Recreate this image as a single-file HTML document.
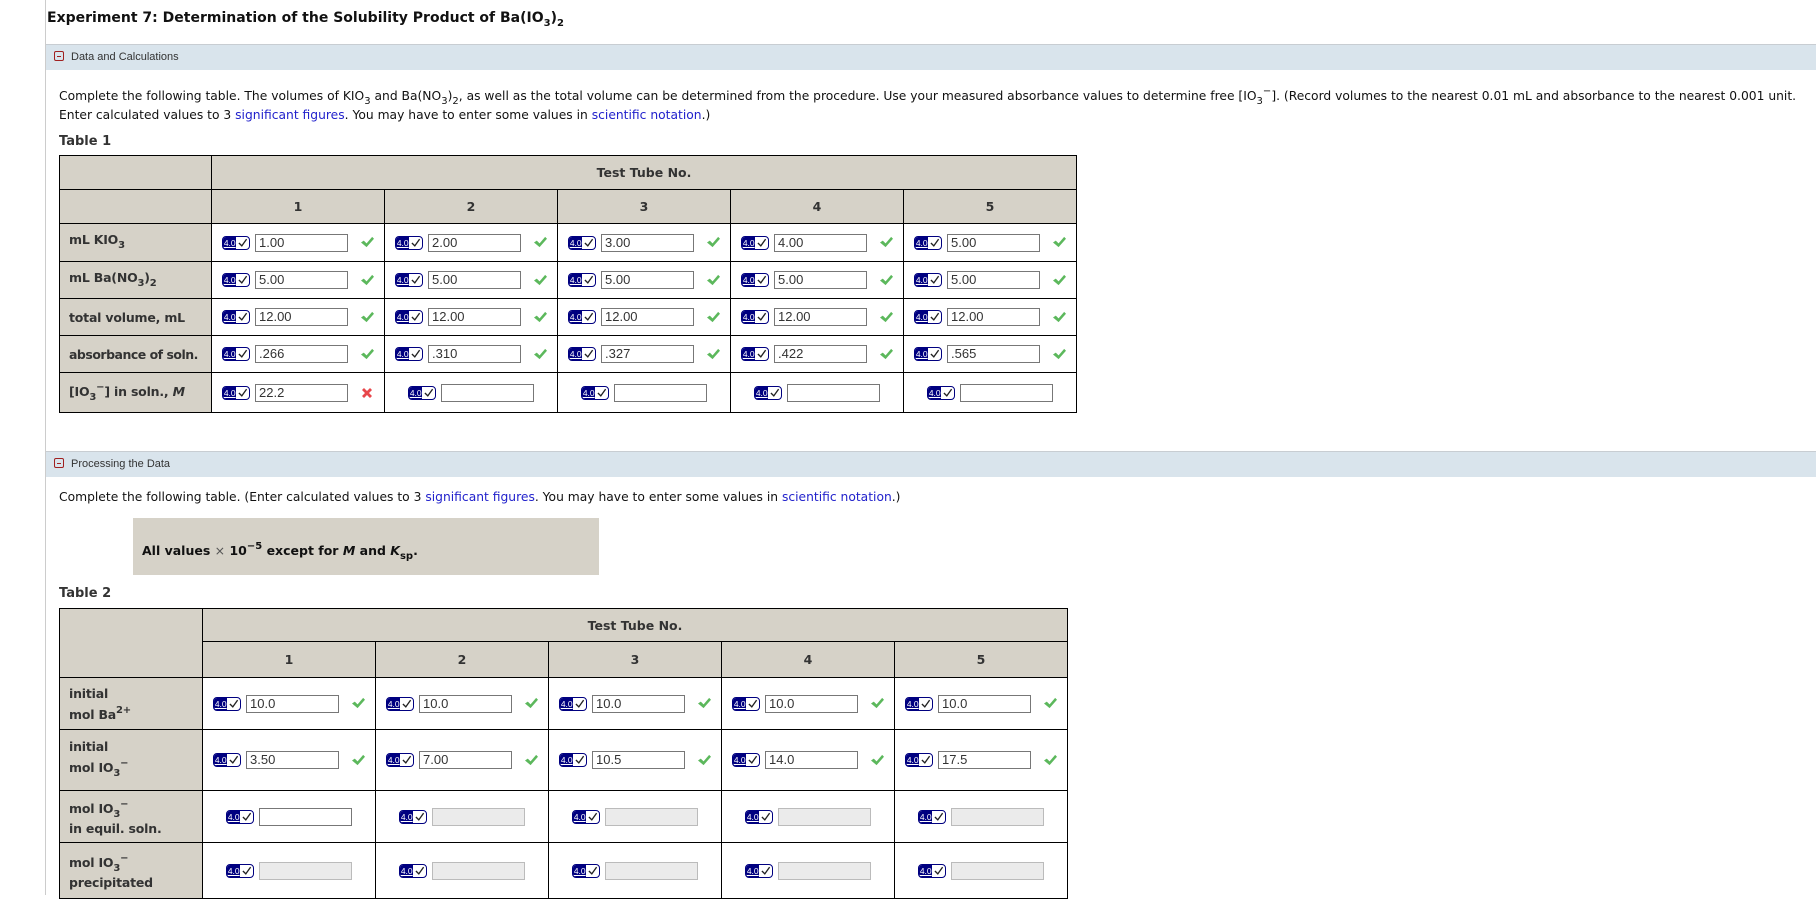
<!DOCTYPE html>
<html><head><meta charset="utf-8"><style>
body{margin:0;background:#fff;width:1816px;height:895px;overflow:hidden;position:relative;font-family:"DejaVu Sans","Liberation Sans",sans-serif;color:#111}
.vl{position:absolute;left:45px;top:0;width:1px;height:895px;background:#ccc}
.title{position:absolute;left:47px;top:10px;font-size:14px;font-weight:bold;white-space:nowrap}
.bar{position:absolute;left:46px;right:0;height:25px;background:#d9e4ec;border-top:1px solid #c8cdd2;font-family:"Liberation Sans",sans-serif;font-size:11px;color:#333;line-height:25px}
.bar i{display:inline-block;width:8px;height:8px;border:1px solid #a02020;border-radius:2px;margin:0 7px 0 8px;position:relative;top:1px}
.bar i:after{content:"";position:absolute;left:2px;top:3.5px;width:4px;height:1px;background:#a02020}
.p{position:absolute;left:59px;font-size:12.3px;white-space:nowrap}
.a{color:#2222cc}
.tl{position:absolute;left:59px;font-size:13px;font-weight:bold;color:#333}
table{position:absolute;border-collapse:collapse;table-layout:fixed}
td{border:1.5px solid #000;padding:0;vertical-align:middle}
td.h{background:#d6d2c8;text-align:center;font-weight:bold;font-size:12.5px;color:#333}
td.l{background:#d6d2c8;font-weight:bold;font-size:12.5px;letter-spacing:-0.2px;color:#333;padding-left:9px;line-height:17px;white-space:nowrap}
td.c{background:#fff}
.w{display:flex;align-items:center;padding-left:10px}
.w.n{justify-content:center;padding-left:0}
.b{display:inline-flex;width:28px;height:14px;border:1px solid #000080;border-radius:4px;overflow:hidden;background:#fff;box-sizing:border-box}
.b span{background:#000080;color:#fff;font-size:8.5px;font-family:"Liberation Sans",sans-serif;width:14px;line-height:13px;text-align:center;text-decoration:underline}
.b svg{margin-left:1px}
.in{width:93px;height:18px;border:1px solid #777;box-sizing:border-box;margin-left:5px;font-family:"Liberation Sans",sans-serif;font-size:13px;line-height:16px;padding-left:3px;color:#333}
.in.g{background:#ebebeb;border-color:#bbb}
.ck{margin-left:12px}
sub{font-size:10px;vertical-align:-4px}
sup{font-size:10px;vertical-align:6px}
</style></head><body>
<div class="vl"></div>
<div class="title">Experiment 7: Determination of the Solubility Product of Ba(IO<sub>3</sub>)<sub>2</sub></div>
<div class="bar" style="top:44px"><i></i>Data and Calculations</div>
<div class="p" style="top:86px">Complete the following table. The volumes of KIO<sub>3</sub> and Ba(NO<sub>3</sub>)<sub>2</sub>, as well as the total volume can be determined from the procedure. Use your measured absorbance values to determine free [IO<sub>3</sub><sup>−</sup>]. (Record volumes to the nearest 0.01 mL and absorbance to the nearest 0.001 unit.</div>
<div class="p" style="top:108px">Enter calculated values to 3 <span class="a">significant figures</span>. You may have to enter some values in <span class="a">scientific notation</span>.)</div>
<div class="tl" style="top:134px">Table 1</div>

<svg width="0" height="0" style="position:absolute"><defs>
<symbol id="bc" viewBox="0 0 12 11"><path d="M2 6 L5 9 L10 2" fill="none" stroke="#222" stroke-width="1.4"/></symbol>
<symbol id="gc" viewBox="0 0 16 14"><path d="M1 7 L4 5 L7 8 L13 1 L15 3 L7 12 Z" fill="#5cb85c"/></symbol>
</defs></svg>

<table style="left:59px;top:155px;width:1018px">
<colgroup><col style="width:152px"><col style="width:173px"><col style="width:173px"><col style="width:173px"><col style="width:173px"><col style="width:173px"></colgroup>
<tr style="height:34px"><td class="h"></td><td class="h" colspan="5">Test Tube No.</td></tr>
<tr style="height:34px"><td class="h"></td><td class="h">1</td><td class="h">2</td><td class="h">3</td><td class="h">4</td><td class="h">5</td></tr>
<tr style="height:38px"><td class="l">mL KIO<sub>3</sub></td>
<td class="c"><div class="w"><span class="b"><span>4.0</span><svg width="12" height="11"><use href="#bc"/></svg></span><div class="in">1.00</div><svg class="ck" width="15" height="13"><use href="#gc"/></svg></div></td>
<td class="c"><div class="w"><span class="b"><span>4.0</span><svg width="12" height="11"><use href="#bc"/></svg></span><div class="in">2.00</div><svg class="ck" width="15" height="13"><use href="#gc"/></svg></div></td>
<td class="c"><div class="w"><span class="b"><span>4.0</span><svg width="12" height="11"><use href="#bc"/></svg></span><div class="in">3.00</div><svg class="ck" width="15" height="13"><use href="#gc"/></svg></div></td>
<td class="c"><div class="w"><span class="b"><span>4.0</span><svg width="12" height="11"><use href="#bc"/></svg></span><div class="in">4.00</div><svg class="ck" width="15" height="13"><use href="#gc"/></svg></div></td>
<td class="c"><div class="w"><span class="b"><span>4.0</span><svg width="12" height="11"><use href="#bc"/></svg></span><div class="in">5.00</div><svg class="ck" width="15" height="13"><use href="#gc"/></svg></div></td></tr>
<tr style="height:37px"><td class="l">mL Ba(NO<sub>3</sub>)<sub>2</sub></td>
<td class="c"><div class="w"><span class="b"><span>4.0</span><svg width="12" height="11"><use href="#bc"/></svg></span><div class="in">5.00</div><svg class="ck" width="15" height="13"><use href="#gc"/></svg></div></td>
<td class="c"><div class="w"><span class="b"><span>4.0</span><svg width="12" height="11"><use href="#bc"/></svg></span><div class="in">5.00</div><svg class="ck" width="15" height="13"><use href="#gc"/></svg></div></td>
<td class="c"><div class="w"><span class="b"><span>4.0</span><svg width="12" height="11"><use href="#bc"/></svg></span><div class="in">5.00</div><svg class="ck" width="15" height="13"><use href="#gc"/></svg></div></td>
<td class="c"><div class="w"><span class="b"><span>4.0</span><svg width="12" height="11"><use href="#bc"/></svg></span><div class="in">5.00</div><svg class="ck" width="15" height="13"><use href="#gc"/></svg></div></td>
<td class="c"><div class="w"><span class="b"><span>4.0</span><svg width="12" height="11"><use href="#bc"/></svg></span><div class="in">5.00</div><svg class="ck" width="15" height="13"><use href="#gc"/></svg></div></td></tr>
<tr style="height:37px"><td class="l">total volume, mL</td>
<td class="c"><div class="w"><span class="b"><span>4.0</span><svg width="12" height="11"><use href="#bc"/></svg></span><div class="in">12.00</div><svg class="ck" width="15" height="13"><use href="#gc"/></svg></div></td>
<td class="c"><div class="w"><span class="b"><span>4.0</span><svg width="12" height="11"><use href="#bc"/></svg></span><div class="in">12.00</div><svg class="ck" width="15" height="13"><use href="#gc"/></svg></div></td>
<td class="c"><div class="w"><span class="b"><span>4.0</span><svg width="12" height="11"><use href="#bc"/></svg></span><div class="in">12.00</div><svg class="ck" width="15" height="13"><use href="#gc"/></svg></div></td>
<td class="c"><div class="w"><span class="b"><span>4.0</span><svg width="12" height="11"><use href="#bc"/></svg></span><div class="in">12.00</div><svg class="ck" width="15" height="13"><use href="#gc"/></svg></div></td>
<td class="c"><div class="w"><span class="b"><span>4.0</span><svg width="12" height="11"><use href="#bc"/></svg></span><div class="in">12.00</div><svg class="ck" width="15" height="13"><use href="#gc"/></svg></div></td></tr>
<tr style="height:37px"><td class="l" style="letter-spacing:-0.5px">absorbance of soln.</td>
<td class="c"><div class="w"><span class="b"><span>4.0</span><svg width="12" height="11"><use href="#bc"/></svg></span><div class="in">.266</div><svg class="ck" width="15" height="13"><use href="#gc"/></svg></div></td>
<td class="c"><div class="w"><span class="b"><span>4.0</span><svg width="12" height="11"><use href="#bc"/></svg></span><div class="in">.310</div><svg class="ck" width="15" height="13"><use href="#gc"/></svg></div></td>
<td class="c"><div class="w"><span class="b"><span>4.0</span><svg width="12" height="11"><use href="#bc"/></svg></span><div class="in">.327</div><svg class="ck" width="15" height="13"><use href="#gc"/></svg></div></td>
<td class="c"><div class="w"><span class="b"><span>4.0</span><svg width="12" height="11"><use href="#bc"/></svg></span><div class="in">.422</div><svg class="ck" width="15" height="13"><use href="#gc"/></svg></div></td>
<td class="c"><div class="w"><span class="b"><span>4.0</span><svg width="12" height="11"><use href="#bc"/></svg></span><div class="in">.565</div><svg class="ck" width="15" height="13"><use href="#gc"/></svg></div></td></tr>
<tr style="height:40px"><td class="l">[IO<sub>3</sub><sup>−</sup>] in soln., <i>M</i></td>
<td class="c"><div class="w"><span class="b"><span>4.0</span><svg width="12" height="11"><use href="#bc"/></svg></span><div class="in">22.2</div><svg class="ck" width="14" height="14" viewBox="0 0 14 14"><path d="M2 4 L4 2 L7 5 L10 2 L12 4 L9 7 L12 10 L10 12 L7 9 L4 12 L2 10 L5 7 Z" fill="#e8474b"/></svg></div></td>
<td class="c"><div class="w n"><span class="b"><span>4.0</span><svg width="12" height="11"><use href="#bc"/></svg></span><div class="in"></div></div></td>
<td class="c"><div class="w n"><span class="b"><span>4.0</span><svg width="12" height="11"><use href="#bc"/></svg></span><div class="in"></div></div></td>
<td class="c"><div class="w n"><span class="b"><span>4.0</span><svg width="12" height="11"><use href="#bc"/></svg></span><div class="in"></div></div></td>
<td class="c"><div class="w n"><span class="b"><span>4.0</span><svg width="12" height="11"><use href="#bc"/></svg></span><div class="in"></div></div></td></tr>
</table>

<div class="bar" style="top:451px"><i></i>Processing the Data</div>
<div class="p" style="top:490px">Complete the following table. (Enter calculated values to 3 <span class="a">significant figures</span>. You may have to enter some values in <span class="a">scientific notation</span>.)</div>
<div style="position:absolute;left:133px;top:518px;width:466px;height:57px;background:#d6d2c8;font-weight:bold;font-size:12.5px;line-height:57px;padding-left:9px;box-sizing:border-box">All values <span style="font-weight:normal;color:#555">×</span> 10<sup>−5</sup> except for <i>M</i> and <i>K</i><sub>sp</sub>.</div>
<div class="tl" style="top:586px">Table 2</div>

<table style="left:59px;top:608px;width:1009px">
<colgroup><col style="width:143px"><col style="width:173px"><col style="width:173px"><col style="width:173px"><col style="width:173px"><col style="width:173px"></colgroup>
<tr style="height:33px"><td class="h" rowspan="2"></td><td class="h" colspan="5">Test Tube No.</td></tr>
<tr style="height:36px"><td class="h">1</td><td class="h">2</td><td class="h">3</td><td class="h">4</td><td class="h">5</td></tr>
<tr style="height:52px"><td class="l">initial<br>mol Ba<sup>2+</sup></td>
<td class="c"><div class="w"><span class="b"><span>4.0</span><svg width="12" height="11"><use href="#bc"/></svg></span><div class="in">10.0</div><svg class="ck" width="15" height="13"><use href="#gc"/></svg></div></td>
<td class="c"><div class="w"><span class="b"><span>4.0</span><svg width="12" height="11"><use href="#bc"/></svg></span><div class="in">10.0</div><svg class="ck" width="15" height="13"><use href="#gc"/></svg></div></td>
<td class="c"><div class="w"><span class="b"><span>4.0</span><svg width="12" height="11"><use href="#bc"/></svg></span><div class="in">10.0</div><svg class="ck" width="15" height="13"><use href="#gc"/></svg></div></td>
<td class="c"><div class="w"><span class="b"><span>4.0</span><svg width="12" height="11"><use href="#bc"/></svg></span><div class="in">10.0</div><svg class="ck" width="15" height="13"><use href="#gc"/></svg></div></td>
<td class="c"><div class="w"><span class="b"><span>4.0</span><svg width="12" height="11"><use href="#bc"/></svg></span><div class="in">10.0</div><svg class="ck" width="15" height="13"><use href="#gc"/></svg></div></td></tr>
<tr style="height:61px"><td class="l">initial<br>mol IO<sub>3</sub><sup>−</sup></td>
<td class="c"><div class="w"><span class="b"><span>4.0</span><svg width="12" height="11"><use href="#bc"/></svg></span><div class="in">3.50</div><svg class="ck" width="15" height="13"><use href="#gc"/></svg></div></td>
<td class="c"><div class="w"><span class="b"><span>4.0</span><svg width="12" height="11"><use href="#bc"/></svg></span><div class="in">7.00</div><svg class="ck" width="15" height="13"><use href="#gc"/></svg></div></td>
<td class="c"><div class="w"><span class="b"><span>4.0</span><svg width="12" height="11"><use href="#bc"/></svg></span><div class="in">10.5</div><svg class="ck" width="15" height="13"><use href="#gc"/></svg></div></td>
<td class="c"><div class="w"><span class="b"><span>4.0</span><svg width="12" height="11"><use href="#bc"/></svg></span><div class="in">14.0</div><svg class="ck" width="15" height="13"><use href="#gc"/></svg></div></td>
<td class="c"><div class="w"><span class="b"><span>4.0</span><svg width="12" height="11"><use href="#bc"/></svg></span><div class="in">17.5</div><svg class="ck" width="15" height="13"><use href="#gc"/></svg></div></td></tr>
<tr style="height:52px"><td class="l" style="line-height:14px">mol IO<sub>3</sub><sup>−</sup><br>in equil. soln.</td>
<td class="c"><div class="w n"><span class="b"><span>4.0</span><svg width="12" height="11"><use href="#bc"/></svg></span><div class="in"></div></div></td>
<td class="c"><div class="w n"><span class="b"><span>4.0</span><svg width="12" height="11"><use href="#bc"/></svg></span><div class="in g"></div></div></td>
<td class="c"><div class="w n"><span class="b"><span>4.0</span><svg width="12" height="11"><use href="#bc"/></svg></span><div class="in g"></div></div></td>
<td class="c"><div class="w n"><span class="b"><span>4.0</span><svg width="12" height="11"><use href="#bc"/></svg></span><div class="in g"></div></div></td>
<td class="c"><div class="w n"><span class="b"><span>4.0</span><svg width="12" height="11"><use href="#bc"/></svg></span><div class="in g"></div></div></td></tr>
<tr style="height:56px"><td class="l" style="line-height:14px">mol IO<sub>3</sub><sup>−</sup><br>precipitated</td>
<td class="c"><div class="w n"><span class="b"><span>4.0</span><svg width="12" height="11"><use href="#bc"/></svg></span><div class="in g"></div></div></td>
<td class="c"><div class="w n"><span class="b"><span>4.0</span><svg width="12" height="11"><use href="#bc"/></svg></span><div class="in g"></div></div></td>
<td class="c"><div class="w n"><span class="b"><span>4.0</span><svg width="12" height="11"><use href="#bc"/></svg></span><div class="in g"></div></div></td>
<td class="c"><div class="w n"><span class="b"><span>4.0</span><svg width="12" height="11"><use href="#bc"/></svg></span><div class="in g"></div></div></td>
<td class="c"><div class="w n"><span class="b"><span>4.0</span><svg width="12" height="11"><use href="#bc"/></svg></span><div class="in g"></div></div></td></tr>
</table>
</body></html>
